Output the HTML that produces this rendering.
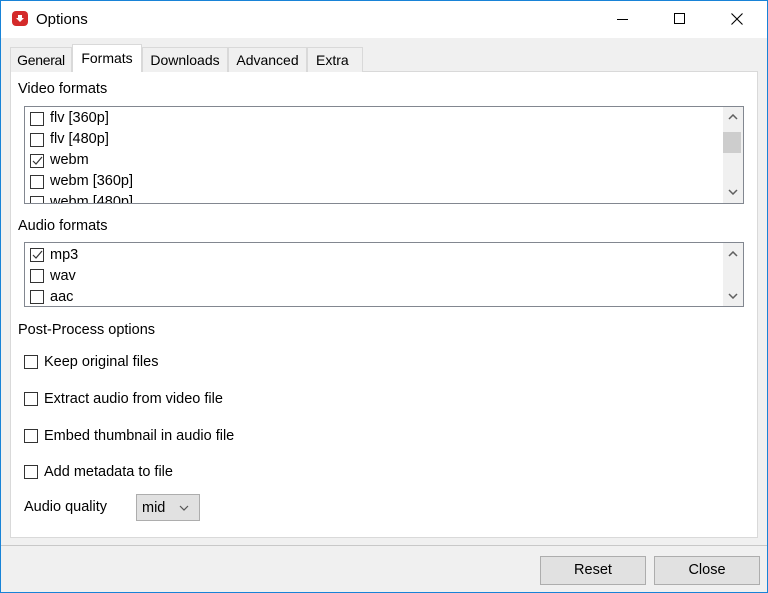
<!DOCTYPE html><html><head><style>
*{box-sizing:border-box;margin:0;padding:0}
body{width:768px;height:593px;overflow:hidden;font-family:"Liberation Sans",sans-serif;font-size:14.5px;color:#000;background:#f0f0f0;position:relative}
.a{position:absolute}
.win{left:0;top:0;width:768px;height:593px;border:1px solid #1883d7;}
.cb{position:absolute;width:14px;height:14px;border:1px solid #333;background:#fff}
.t{position:absolute;white-space:nowrap}
.tab{position:absolute;top:47px;height:25px;border:1px solid #d9d9d9;border-bottom:none;background:#f0f0f0;text-align:center;line-height:24px;font-size:14px}
.btn{position:absolute;top:556px;height:29px;width:106px;background:#e1e1e1;border:1px solid #adadad;text-align:center;line-height:27px}
.list{position:absolute;left:24px;width:720px;background:#fff;border:1px solid #828790}
.sb{position:absolute;right:0;top:0;bottom:0;width:20px;background:#f0f0f0}
</style></head><body>
<div class="a win"></div>
<div class="a" style="left:1px;top:1px;width:766px;height:37px;background:#fff"></div>
<div class="a" style="left:12px;top:11px;width:16px;height:15px;background:#d42a2a;border-radius:4px"></div>
<svg class="a" style="left:14px;top:13px" width="12" height="11"><path d="M4 2h4v3h2l-4 4-4-4h2z" fill="#fff"/></svg>
<div class="t" style="left:36px;top:11px;font-size:15px">Options</div>
<div class="a" style="left:617px;top:19px;width:11px;height:1px;background:#000"></div>
<div class="a" style="left:674px;top:13px;width:11px;height:11px;border:1px solid #000"></div>
<svg class="a" style="left:731px;top:13px" width="12" height="12"><path d="M0.5 0.5L11.5 11.5M11.5 0.5L0.5 11.5" stroke="#000" stroke-width="1.1"/></svg>
<div class="a" style="left:10px;top:71px;width:748px;height:467px;background:#fff;border:1px solid #d9d9d9"></div>
<div class="tab" style="left:10px;width:62px;letter-spacing:-0.3px">General</div>
<div class="tab" style="left:142px;width:86px">Downloads</div>
<div class="tab" style="left:228px;width:79px">Advanced</div>
<div class="tab" style="left:307px;width:56px;text-align:left;padding-left:8px">Extra</div>
<div class="tab" style="left:72px;top:44px;height:28px;width:70px;background:#fff;line-height:26px;z-index:2">Formats</div>
<div class="t" style="left:18px;top:81px">Video formats</div>
<div class="list" style="top:106px;height:98px;overflow:hidden">
<div class="cb" style="left:5px;top:5px"></div><div class="t" style="left:25px;top:3px">flv [360p]</div>
<div class="cb" style="left:5px;top:26px"></div><div class="t" style="left:25px;top:24px">flv [480p]</div>
<div class="cb" style="left:5px;top:47px"></div><svg class="a" style="left:7px;top:49px" width="11" height="10"><path d="M1 5l3 3 6-7" stroke="#333" fill="none" stroke-width="1.2"/></svg><div class="t" style="left:25px;top:45px">webm</div>
<div class="cb" style="left:5px;top:68px"></div><div class="t" style="left:25px;top:66px">webm [360p]</div>
<div class="cb" style="left:5px;top:89px"></div><div class="t" style="left:25px;top:87px">webm [480p]</div>
<div class="sb"><div class="a" style="left:0;top:25px;width:18px;height:21px;background:#cdcdcd"></div>
<svg class="a" style="left:5px;top:7px" width="10" height="6"><path d="M1 5l4-4 4 4" stroke="#606060" fill="none" stroke-width="1.5"/></svg>
<svg class="a" style="left:5px;top:82px" width="10" height="6"><path d="M1 1l4 4 4-4" stroke="#606060" fill="none" stroke-width="1.5"/></svg></div>
</div>
<div class="t" style="left:18px;top:218px">Audio formats</div>
<div class="list" style="top:242px;height:65px">
<div class="cb" style="left:5px;top:5px"></div><svg class="a" style="left:7px;top:7px" width="11" height="10"><path d="M1 5l3 3 6-7" stroke="#333" fill="none" stroke-width="1.2"/></svg><div class="t" style="left:25px;top:4px">mp3</div>
<div class="cb" style="left:5px;top:26px"></div><div class="t" style="left:25px;top:25px">wav</div>
<div class="cb" style="left:5px;top:47px"></div><div class="t" style="left:25px;top:46px">aac</div>
<div class="sb"><svg class="a" style="left:5px;top:8px" width="10" height="6"><path d="M1 5l4-4 4 4" stroke="#606060" fill="none" stroke-width="1.5"/></svg>
<svg class="a" style="left:5px;top:50px" width="10" height="6"><path d="M1 1l4 4 4-4" stroke="#606060" fill="none" stroke-width="1.5"/></svg></div>
</div>
<div class="t" style="left:18px;top:322px">Post-Process options</div>
<div class="cb" style="left:24px;top:355px"></div><div class="t" style="left:44px;top:354px">Keep original files</div>
<div class="cb" style="left:24px;top:392px"></div><div class="t" style="left:44px;top:391px">Extract audio from video file</div>
<div class="cb" style="left:24px;top:429px"></div><div class="t" style="left:44px;top:428px">Embed thumbnail in audio file</div>
<div class="cb" style="left:24px;top:465px"></div><div class="t" style="left:44px;top:464px">Add metadata to file</div>
<div class="t" style="left:24px;top:499px">Audio quality</div>
<div class="a" style="left:136px;top:494px;width:64px;height:27px;background:#e1e1e1;border:1px solid #adadad"></div>
<div class="t" style="left:142px;top:500px">mid</div>
<svg class="a" style="left:179px;top:505px" width="10" height="6"><path d="M1 1l4 4 4-4" stroke="#555" fill="none" stroke-width="1.2"/></svg>
<div class="a" style="left:1px;top:545px;width:766px;height:1px;background:#c8c8c8"></div>
<div class="btn" style="left:540px">Reset</div>
<div class="btn" style="left:654px">Close</div>
</body></html>
